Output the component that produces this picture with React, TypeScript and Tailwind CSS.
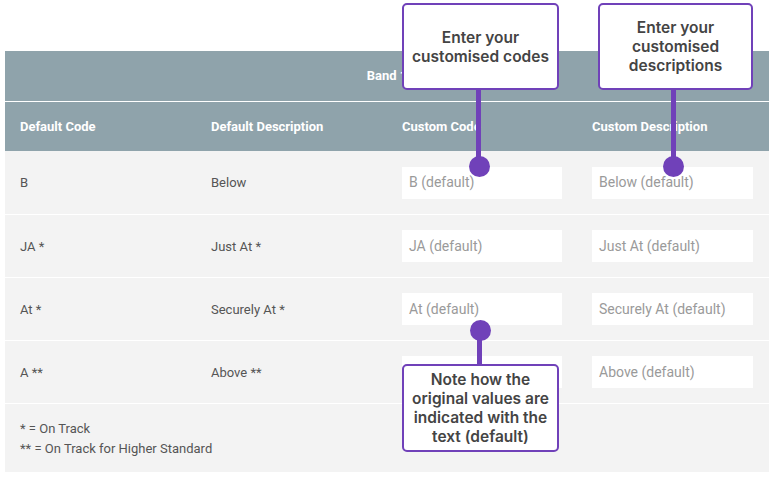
import React from 'react';

const rows = [
  { code: 'B', desc: 'Below', cc: 'B (default)', cd: 'Below (default)' },
  { code: 'JA *', desc: 'Just At *', cc: 'JA (default)', cd: 'Just At (default)' },
  { code: 'At *', desc: 'Securely At *', cc: 'At (default)', cd: 'Securely At (default)' },
  { code: 'A **', desc: 'Above **', cc: 'A (default)', cd: 'Above (default)' },
];

function Callout({ className, children }: { className: string; children: React.ReactNode }) {
  return (
    <div
      className={`absolute flex items-center justify-center bg-white border-2 border-[#7041b9] rounded-[5px] text-center text-[15.5px] leading-[19px] font-semibold text-[#444] ${className}`}
      style={{ fontFamily: 'Inter, "Noto Sans", sans-serif' }}
    >
      {children}
    </div>
  );
}

export default function App() {
  return (
    <div className="relative w-[772px] h-[478px] bg-white overflow-hidden" style={{ fontFamily: 'Roboto, "Liberation Sans", sans-serif' }}>
      {/* Table */}
      <div className="ml-[5px] mt-[51px] w-[764px] bg-[#f3f3f3]">
        <div className="h-[51px] bg-[#8fa3ab] border-b border-white flex items-center justify-center text-white text-[13px] font-bold">
          Band 1
        </div>
        <div className="h-[49px] bg-[#8fa3ab] grid grid-cols-4 items-center text-white text-[13px] font-bold">
          <div className="pl-[15px]">Default Code</div>
          <div className="pl-[15px]">Default Description</div>
          <div className="pl-[15px]">Custom Code</div>
          <div className="pl-[14px]">Custom Description</div>
        </div>
        {rows.map((r, i) => (
          <div key={r.code} className={`h-[63px] grid grid-cols-4 items-center text-[13px] text-[#555] ${i > 0 ? 'border-t border-white' : ''}`}>
            <div className="pl-[15px] pt-[1px]">{r.code}</div>
            <div className="pl-[15px] pt-[1px]">{r.desc}</div>
            <div className="pl-[15px]">
              <div className="w-[160px] h-[32px] bg-white flex items-center pl-[7px] text-[14px] text-[#9a9a9a]">{r.cc}</div>
            </div>
            <div className="pl-[14px]">
              <div className="w-[161px] h-[32px] bg-white flex items-center pl-[7px] text-[14px] text-[#9a9a9a]">{r.cd}</div>
            </div>
          </div>
        ))}
        <div className="h-[69px] border-t border-white pl-[15px] pt-[15px] text-[13px] leading-[20px] text-[#555]">
          <div>* = On Track</div>
          <div>** = On Track for Higher Standard</div>
        </div>
      </div>

      {/* Annotations */}
      <div className="absolute left-[476px] top-[88px] w-[5px] h-[78px] bg-[#7041b9]" />
      <div className="absolute left-[469px] top-[156px] w-[21px] h-[21px] rounded-full bg-[#7041b9]" />
      <div className="absolute left-[671px] top-[88px] w-[5px] h-[78px] bg-[#7041b9]" />
      <div className="absolute left-[663px] top-[156px] w-[21px] h-[21px] rounded-full bg-[#7041b9]" />
      <div className="absolute left-[477px] top-[330px] w-[5px] h-[36px] bg-[#7041b9]" />
      <div className="absolute left-[470px] top-[320px] w-[21px] h-[21px] rounded-full bg-[#7041b9]" />

      <Callout className="left-[402px] top-[3px] w-[157px] h-[87px]">
        <span>Enter your<br />customised codes</span>
      </Callout>
      <Callout className="left-[598px] top-[3px] w-[155px] h-[87px]">
        <span>Enter your<br />customised<br />descriptions</span>
      </Callout>
      <Callout className="left-[402px] top-[364px] w-[157px] h-[88px]">
        <span>Note how the<br />original values are<br />indicated with the<br />text (default)</span>
      </Callout>
    </div>
  );
}
